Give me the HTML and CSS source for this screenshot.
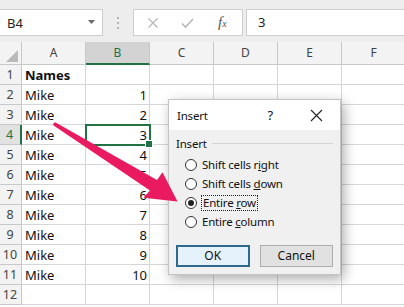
FILE: index.html
```html
<!DOCTYPE html>
<html>
<head>
<meta charset="utf-8">
<link rel="stylesheet" href="styles.css">
</head>
<body>
<div class="app">
  <div class="toolbar">
    <div class="namebox">
      <span class="ref">B4</span>
      <svg class="caret" width="7" height="4" viewBox="0 0 7 4"><path d="M0 0h7L3.5 4z" fill="#6a6a6a"/></svg>
    </div>
    <div class="grip"><i></i><i></i><i></i></div>
    <div class="fxbox">
      <svg class="ico" width="12" height="12" viewBox="0 0 12 12"><path d="M1.5 1.5l9 9M10.5 1.5l-9 9" stroke="#b8b8b8" stroke-width="1.3" fill="none"/></svg>
      <svg class="ico" width="13" height="12" viewBox="0 0 13 12"><path d="M1 6.5l3.5 3.5L12 2" stroke="#b8b8b8" stroke-width="1.6" fill="none"/></svg>
      <span class="fx">f<span class="fxs">x</span></span>
    </div>
    <div class="formula">3</div>
  </div>

  <div class="sheet">
    <div class="corner"><svg width="12" height="12" viewBox="0 0 12 12"><path d="M12 0V12H0z" fill="#b9b9b9"/></svg></div>
    <div class="ch">A</div>
    <div class="ch sel">B</div>
    <div class="ch">C</div>
    <div class="ch">D</div>
    <div class="ch">E</div>
    <div class="ch">F</div>

    <div class="rh">1</div><div class="c b">Names</div><div class="c"></div><div class="c"></div><div class="c"></div><div class="c"></div><div class="c"></div>
    <div class="rh">2</div><div class="c">Mike</div><div class="c n">1</div><div class="c"></div><div class="c"></div><div class="c"></div><div class="c"></div>
    <div class="rh">3</div><div class="c">Mike</div><div class="c n">2</div><div class="c"></div><div class="c"></div><div class="c"></div><div class="c"></div>
    <div class="rh sel">4</div><div class="c">Mike</div><div class="c n active">3</div><div class="c"></div><div class="c"></div><div class="c"></div><div class="c"></div>
    <div class="rh">5</div><div class="c">Mike</div><div class="c n">4</div><div class="c"></div><div class="c"></div><div class="c"></div><div class="c"></div>
    <div class="rh">6</div><div class="c">Mike</div><div class="c n">5</div><div class="c"></div><div class="c"></div><div class="c"></div><div class="c"></div>
    <div class="rh">7</div><div class="c">Mike</div><div class="c n">6</div><div class="c"></div><div class="c"></div><div class="c"></div><div class="c"></div>
    <div class="rh">8</div><div class="c">Mike</div><div class="c n">7</div><div class="c"></div><div class="c"></div><div class="c"></div><div class="c"></div>
    <div class="rh">9</div><div class="c">Mike</div><div class="c n">8</div><div class="c"></div><div class="c"></div><div class="c"></div><div class="c"></div>
    <div class="rh">10</div><div class="c">Mike</div><div class="c n">9</div><div class="c"></div><div class="c"></div><div class="c"></div><div class="c"></div>
    <div class="rh">11</div><div class="c">Mike</div><div class="c n">10</div><div class="c"></div><div class="c"></div><div class="c"></div><div class="c"></div>
    <div class="rh">12</div><div class="c"></div><div class="c"></div><div class="c"></div><div class="c"></div><div class="c"></div><div class="c"></div>
  </div>

  <div class="dialog">
    <div class="titlebar">
      <span class="title">Insert</span>
      <span class="help">?</span>
      <svg class="close" width="13" height="13" viewBox="0 0 13 13"><path d="M1 1l11 11M12 1L1 12" stroke="#222" stroke-width="1.1" fill="none"/></svg>
    </div>
    <div class="body">
      <div class="group"><span>Insert</span><div class="rule"></div></div>
      <div class="options">
        <div class="opt"><span class="radio"></span><span class="lbl">Shift cells r<u>i</u>ght</span></div>
        <div class="opt"><span class="radio"></span><span class="lbl">Shift cells <u>d</u>own</span></div>
        <div class="opt"><span class="radio on"></span><span class="lbl focus">Entire <u>r</u>ow</span></div>
        <div class="opt"><span class="radio"></span><span class="lbl">Entire <u>c</u>olumn</span></div>
      </div>
      <div class="buttons">
        <div class="btn ok">OK</div>
        <div class="btn">Cancel</div>
      </div>
    </div>
  </div>

  <svg class="arrow" width="404" height="307" viewBox="0 0 404 307">
    <path d="M55.2 122.2 L157 180 L162.5 172.3 L177.5 201.5 L143.5 197.8 L150 190.6 L53.6 125.6 Q52.2 123.6 55.2 122.2 Z" fill="#ea1a60"/>
  </svg>
</div>
</body>
</html>
```

FILE: styles.css
```css
* { box-sizing: border-box; }
html, body { margin: 0; padding: 0; }
body { width: 404px; height: 307px; overflow: hidden; background: #fff; font-family: "Noto Sans", "Open Sans", sans-serif; }
.app { position: relative; width: 404px; height: 307px; overflow: hidden; }

.toolbar { height: 42px; background: #ededed; display: flex; align-items: flex-start; padding-top: 9px; }
.namebox { width: 103px; height: 27px; background: #fff; border: 1px solid #cdcdcd; border-left: none; display: flex; align-items: center; justify-content: space-between; padding: 0 7px 0 7px; font-size: 13px; color: #222; }
.caret { margin-top: -1px; }
.grip { width: 30px; height: 27px; display: flex; flex-direction: column; align-items: center; justify-content: center; gap: 3px; }
.grip i { display: block; width: 2px; height: 2px; background: #b4b4b4; }
.fxbox { width: 110px; height: 27px; background: #fff; border: 1px solid #cdcdcd; display: flex; align-items: center; padding-left: 13px; gap: 22px; }
.fx { font-family: "Liberation Serif", serif; font-style: italic; font-size: 15px; color: #555; margin-left: 2px; }
.fxs { font-size: 10px; }
.formula { flex: 1; margin-left: 3px; height: 27px; background: #fff; border: 1px solid #cdcdcd; border-right: none; font-size: 13px; color: #222; padding-left: 11px; line-height: 25px; }

.sheet { display: grid; grid-template-columns: 22px repeat(6, 64px); grid-template-rows: 23px; grid-auto-rows: 20px; }
.sheet > div { border-right: 1px solid #d6d6d6; border-bottom: 1px solid #d6d6d6; }
.corner { background: #f3f3f3; display: flex; align-items: flex-end; justify-content: flex-end; padding: 0 3px 2px 0; border-color: #c8c8c8 !important; }
.ch { background: #f3f3f3; text-align: center; font-size: 12px; color: #444; line-height: 22px; border-color: #c8c8c8 !important; }
.ch.sel { background: #d3d3d3; color: #217346; border-bottom: 2px solid #217346 !important; }
.rh { background: #f3f3f3; text-align: center; font-size: 12.5px; color: #444; line-height: 19px; border-color: #c8c8c8 !important; padding-right: 1px; }
.rh.sel { background: #e1e1e1; color: #217346; border-right: 2px solid #217346 !important; }
.c { font-size: 13px; color: #111; line-height: 19px; padding: 1px 3px 0 3px; white-space: nowrap; }
.c.b { font-weight: bold; }
.c.n { text-align: right; padding-right: 2px; }
.c.active { position: relative; z-index: 1; outline: 2px solid #217346; outline-offset: -1px; }
.c.active::after { content: ""; position: absolute; right: -4px; bottom: -4px; width: 6px; height: 6px; background: #217346; border: 1px solid #fff; }

.dialog { position: absolute; left: 168px; top: 99px; width: 173px; height: 176px; background: #f0f0f0; border: 1px solid #c4c4c4; box-shadow: 3px 4px 12px rgba(0,0,0,0.33); display: flex; flex-direction: column; font-size: 11.5px; letter-spacing: -0.2px; color: #111; z-index: 2; }
.titlebar { height: 30px; background: #fff; display: flex; align-items: center; padding-left: 8px; position: relative; }
.title { flex: 1; }
.help { font-size: 13px; margin-right: 37px; }
.close { margin-right: 17px; }
.body { flex: 1; padding: 4px 7px 0 7px; display: flex; flex-direction: column; }
.group { display: flex; align-items: center; gap: 5px; height: 18px; }
.rule { flex: 1; height: 1px; background: #d4d4d4; margin-right: 0; }
.options { margin-top: 3px; padding-left: 9px; display: flex; flex-direction: column; }
.opt { height: 19px; display: flex; align-items: center; gap: 5px; }
.radio { width: 12px; height: 12px; border-radius: 50%; border: 1px solid #333; background: #fff; display: flex; align-items: center; justify-content: center; }
.radio.on::after { content: ""; width: 6px; height: 6px; border-radius: 50%; background: #222; }
.lbl { white-space: nowrap; line-height: 14px; }
.lbl.focus { outline: 1px dotted #222; outline-offset: 0; padding: 0 1px; }
.buttons { margin-top: auto; margin-bottom: 7px; display: flex; gap: 10px; }
.btn { width: 74px; height: 22px; background: #e1e1e1; border: 1px solid #adadad; text-align: center; line-height: 20px; font-size: 12px; letter-spacing: 0; }
.btn.ok { background: #e5f1fb; border: 2px solid #2e6a8c; line-height: 18px; }

.arrow { position: absolute; left: 0; top: 0; z-index: 3; pointer-events: none; }
```
